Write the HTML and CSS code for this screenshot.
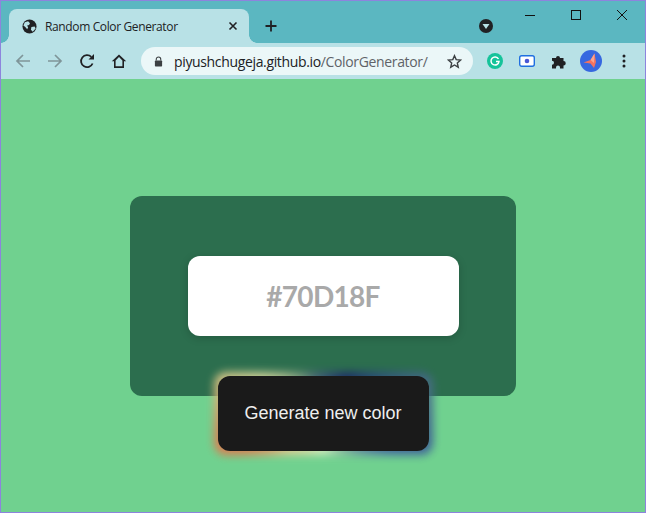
FILE: index.html
```html
<!DOCTYPE html>
<html lang="en">
<head>
<meta charset="utf-8">
<title>Random Color Generator</title>
<link rel="stylesheet" href="styles.css">
</head>
<body>
<div class="window">
  <header class="tabstrip">
    <div class="tab">
      <svg class="favicon" viewBox="0 0 16 16"><circle cx="8" cy="8" r="7.500" fill="#202124"/><path d="M3 3.500 6.500 2.500 8.500 4.500 7.500 6.500 5.500 7 6.500 9 5.500 11 3.500 8.500 1.500 7ZM10 8.500 13.500 8 14.500 10 11.500 13.500 9.500 11.500Z" fill="#b8e1e6"/></svg>
      <span class="tab-title">Random Color Generator</span>
      <svg class="tab-close" viewBox="0 0 10 10"><path d="M1.500 1.500 8.500 8.500M8.500 1.500 1.500 8.500" stroke="#202124" stroke-width="1.600" fill="none"/></svg>
    </div>
    <svg class="new-tab" viewBox="0 0 12 12"><path d="M6 .5V11.500M.5 6H11.500" stroke="#202124" stroke-width="1.800" fill="none"/></svg>
    <svg class="profile-drop" viewBox="0 0 14 14"><circle cx="7" cy="7" r="7" fill="#202124"/><path d="M3.500 5H10.500L7 10Z" fill="#b8e1e6"/></svg>
    <div class="win-controls">
      <svg viewBox="0 0 12 12"><path d="M1 6.500H11" stroke="#111" stroke-width="1" fill="none"/></svg>
      <svg viewBox="0 0 12 12"><rect x="1.500" y="1.500" width="9" height="9" stroke="#111" stroke-width="1" fill="none"/></svg>
      <svg viewBox="0 0 12 12"><path d="M1 1 11 11M11 1 1 11" stroke="#111" stroke-width="1" fill="none"/></svg>
    </div>
  </header>
  <nav class="toolbar">
    <div class="nav-buttons">
      <svg viewBox="0 0 16 16"><path d="M15 8H2M8 2 2 8 8 14" stroke="#7f9599" stroke-width="1.700" fill="none"/></svg>
      <svg viewBox="0 0 16 16"><path d="M1 8H14M8 2 14 8 8 14" stroke="#7f9599" stroke-width="1.700" fill="none"/></svg>
      <svg viewBox="0 0 16 16"><path d="M13.600 10.500A6 6 0 1 1 12.300 3.900" stroke="#202124" stroke-width="1.800" fill="none"/><path d="M9.500 6.500H15V1Z" fill="#202124"/></svg>
      <svg viewBox="0 0 16 16"><path d="M8 1.400 .8 8.200H3V15H13V8.200H15.200ZM4.600 13.300V7.400L8 4 11.400 7.400V13.300Z" fill="#202124" fill-rule="evenodd"/></svg>
    </div>
    <div class="omnibox">
      <svg class="lock" viewBox="0 0 10 12"><path d="M2.500 5V3.500A2.500 2.500 0 0 1 7.500 3.500V5" stroke="#3c4043" stroke-width="1.200" fill="none"/><rect x="1" y="5" width="8" height="6.500" rx=".8" fill="#3c4043"/></svg>
      <span class="url"><span class="host">piyushchugeja.github.io</span><span class="path">/ColorGenerator/</span></span>
      <svg class="star" viewBox="0 0 16 16"><path d="M8 1.800 9.800 6 14.500 6.400 11 9.500 12 14.100 8 11.700 4 14.100 5 9.500 1.500 6.400 6.200 6Z" stroke="#3c4043" stroke-width="1.500" fill="none"/></svg>
    </div>
    <div class="extensions">
      <svg class="ext" viewBox="0 0 16 16"><circle cx="8" cy="8" r="8" fill="#15c39a"/><path d="M11.500 6A4 4 0 1 0 12 8.500H9" stroke="#fff" stroke-width="1.500" fill="none"/></svg>
      <svg class="ext" viewBox="0 0 16 16"><rect x=".7" y="2.700" width="14.600" height="10.600" rx="2" fill="#fff" stroke="#1f6fe0" stroke-width="1.400"/><circle cx="8" cy="8" r="2.300" fill="#4a57d4"/></svg>
      <svg class="ext" viewBox="0 0 16 16"><path d="M1 5H5A2 2 0 1 1 9 5H12.500V8A2 2 0 1 1 12.500 12.500V15.500H9V14.500A2 2 0 0 0 5 14.500V15.500H1V11.800A2 2 0 0 0 1 7.800Z" fill="#202124"/></svg>
      <svg class="avatar" viewBox="0 0 22 22"><circle cx="11" cy="11" r="11" fill="#3668e0"/><path d="M3.500 12.500 10.500 10 14.500 3.500 16 12 14 18 10.500 13.500Z" fill="#f4735f"/><path d="M10.500 10 14.500 3.500 14 13Z" fill="#f9a58f"/></svg>
      <svg class="menu" viewBox="0 0 4 14"><circle cx="2" cy="2" r="1.500" fill="#202124"/><circle cx="2" cy="7" r="1.500" fill="#202124"/><circle cx="2" cy="12" r="1.500" fill="#202124"/></svg>
    </div>
  </nav>
  <main class="page">
    <section class="card">
      <div class="hex">#70D18F</div>
    </section>
    <button class="generate" type="button">Generate new color</button>
  </main>
</div>
</body>
</html>
```
FILE: styles.css
```css
* { box-sizing: border-box; }
html, body { margin: 0; height: 100%; }
body { overflow: hidden; }
.window {
  width: 646px; height: 513px;
  display: flex; flex-direction: column;
  border: 1px solid #8d84dd;
  background: #70d18f;
}
.tabstrip {
  height: 42px; flex: none;
  display: flex; align-items: flex-end;
  padding-left: 8px;
  background: #5bb7c1;
}
.tab {
  position: relative;
  width: 240px; height: 34px;
  display: flex; align-items: center;
  padding: 0 11px 0 13px;
  background: #b8e1e6;
  border-radius: 8px 8px 0 0;
}
.tab::before, .tab::after {
  content: "";
  position: absolute;
  bottom: 0;
  width: 8px; height: 8px;
}
.tab::before {
  left: -8px;
  background: radial-gradient(circle at 0 0, transparent 7.500px, #b8e1e6 8px);
}
.tab::after {
  right: -8px;
  background: radial-gradient(circle at 100% 0, transparent 7.500px, #b8e1e6 8px);
}
.favicon { width: 15px; height: 15px; flex: none; }
.tab-title {
  margin-left: 8px; flex: 1;
  font: 12px "Open Sans", sans-serif;
  color: #202124; white-space: nowrap;
  letter-spacing: -.37px;
}
.tab-close { width: 10px; height: 10px; flex: none; }
.new-tab { width: 12px; height: 12px; margin: 0 0 11px 16px; flex: none; }
.profile-drop { width: 14px; height: 14px; margin: 0 0 10px 202px; flex: none; }
.win-controls {
  display: flex; gap: 34px;
  align-self: flex-start;
  margin: 8px 0 0 31px;
}
.win-controls svg { width: 12px; height: 12px; display: block; }
.toolbar {
  height: 36px; flex: none;
  display: flex; align-items: center;
  background: #b8e1e6;
  padding-left: 14px;
}
.nav-buttons { display: flex; gap: 16px; }
.nav-buttons svg { width: 16px; height: 16px; display: block; }
.omnibox {
  width: 332px; height: 28px;
  margin-left: 14px;
  display: flex; align-items: center;
  padding: 0 10px 0 13px;
  background: #ebf7f8;
  border-radius: 14px;
}
.lock { width: 9px; height: 11px; flex: none; }
.url {
  margin-left: 11px; flex: 1;
  font: 14px "Open Sans", sans-serif;
  white-space: nowrap;
  letter-spacing: -.35px;
}
.host { color: #202124; }
.path { color: #5f6368; }
.star { width: 15px; height: 15px; margin-right: 1px; flex: none; }
.extensions { display: flex; align-items: center; margin-left: 14px; }
.ext { width: 16px; height: 16px; margin-right: 16px; flex: none; }
.avatar { width: 22px; height: 22px; margin-left: -3px; flex: none; }
.menu { width: 4px; height: 14px; margin-left: 20px; flex: none; }
.page {
  flex: 1;
  display: flex; flex-direction: column; align-items: center;
  padding: 117px 0 0 0;
  background: #70d18f;
}
.card {
  width: 386px; height: 200px;
  padding-top: 60px;
  display: flex; justify-content: center; align-items: flex-start;
  background: #2c6e4e;
  border-radius: 12px;
}
.hex {
  width: 271px; height: 80px;
  display: flex; align-items: center; justify-content: center;
  background: #fff;
  border-radius: 12px;
  box-shadow: 0 2px 8px rgba(0, 0, 0, .18);
  font: 700 28px Lato, sans-serif;
  letter-spacing: -.7px;
  color: #a9a9a9;
}
.generate {
  position: relative;
  isolation: isolate;
  width: 211px; height: 75px;
  margin-top: -20px;
  border: 0; padding: 0;
  background: none;
  font: 18px "Liberation Sans", sans-serif;
  color: #eee;
}
.generate::before, .generate::after {
  content: "";
  position: absolute;
  z-index: -1;
  border-radius: 12px;
}
.generate::before {
  inset: -4px;
  filter: blur(4px);
  opacity: .9;
  background: conic-gradient(
    from 0deg,
    #3c5578 0deg, #1b2468 33deg, #2a4a7a 55deg, #4a6f88 75deg,
    #3c5a90 100deg, #3d5aa0 118deg, #8ab0a0 150deg, #dcefc4 180deg,
    #e8c890 225deg, #e8734a 245deg, #e07a50 260deg, #dcc080 285deg,
    #e0dca0 300deg, #7d9a80 328deg, #506a78 345deg, #3c5578 360deg
  );
}
.generate::after {
  inset: 0;
  background: #1a1a1a;
}
```
